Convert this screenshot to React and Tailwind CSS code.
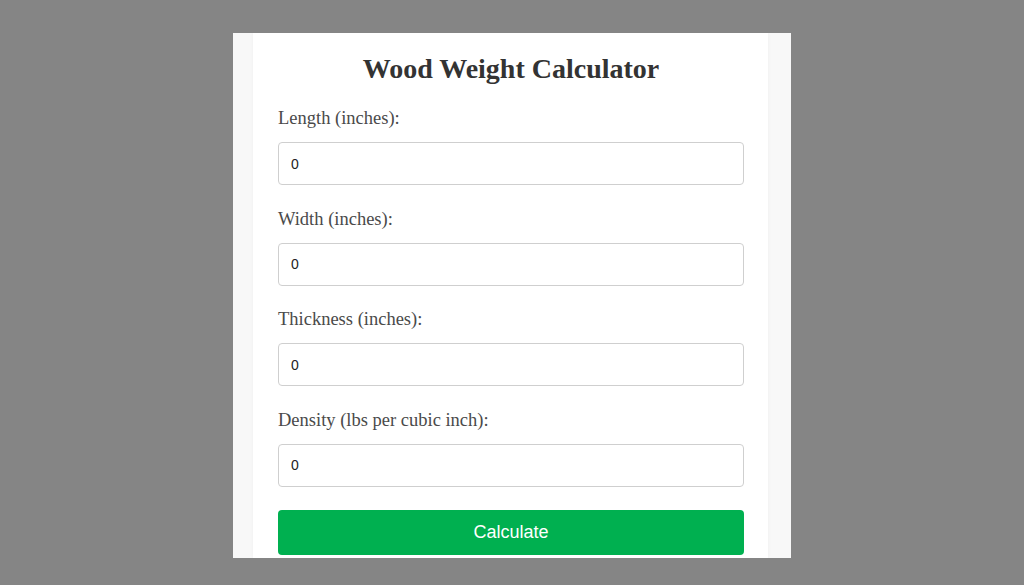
import React, { useState } from 'react';

const fields = [
  { key: 'length', label: 'Length (inches):' },
  { key: 'width', label: 'Width (inches):' },
  { key: 'thickness', label: 'Thickness (inches):' },
  { key: 'density', label: 'Density (lbs per cubic inch):' },
];

const App = () => {
  const [values, setValues] = useState({ length: 0, width: 0, thickness: 0, density: 0 });

  return (
    <div className="w-[1024px] h-[585px] bg-[#858585] overflow-hidden pt-[33px] pl-[233px]">
      {/* Page */}
      <div className="w-[558px] h-[525px] bg-[#f8f8f8] pl-[20px] pr-[23px] overflow-hidden">
        <div className="bg-white h-full pl-[25px] pr-[24px] pt-[20px] shadow-[0_0_4px_rgba(0,0,0,0.04)]">
          <h2 className="text-center text-[28px] leading-[32px] font-bold text-[#333] font-['Liberation_Serif',serif] mb-[23px]">
            Wood Weight Calculator
          </h2>

          {fields.map((f) => (
            <div key={f.key} className="mb-[23.5px]">
              <label className="block text-[18.5px] leading-[20px] text-[#4a4a4a] font-['Liberation_Serif',serif] mb-[14px]">
                {f.label}
              </label>
              <input
                type="number"
                value={values[f.key]}
                onChange={(e) => setValues({ ...values, [f.key]: e.target.value })}
                className="block w-full h-[43px] border border-[#cfcfcf] rounded-[4px] px-[12px] text-[14px] text-[#222] font-['Liberation_Sans',sans-serif] outline-none"
              />
            </div>
          ))}

          <button className="w-full h-[45px] bg-[#00b050] rounded-[4px] text-white text-[18px] font-['Liberation_Sans',sans-serif] -mt-[0.5px]">
            Calculate
          </button>
        </div>
      </div>
    </div>
  );
};

export default App;
